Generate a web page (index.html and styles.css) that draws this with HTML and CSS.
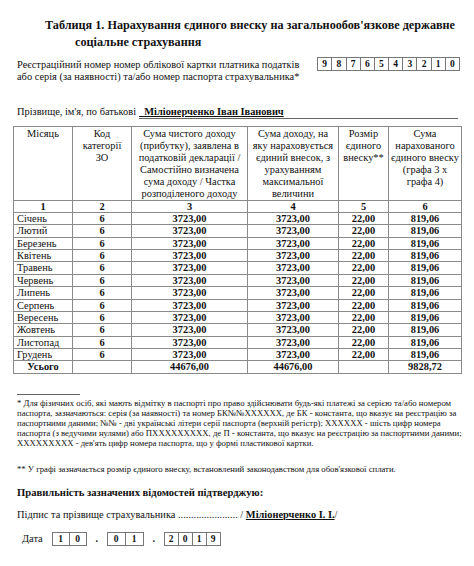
FILE: index.html
```html
<!DOCTYPE html>
<html lang="uk">
<head>
<meta charset="utf-8">
<link rel="stylesheet" href="styles.css">
</head>
<body>
<div class="page">
  <h1 class="title">Таблиця 1. Нарахування єдиного внеску на загальнообов'язкове державне соціальне страхування</h1>

  <div class="reg">
    <div class="reg-text">Реєстраційний номер номер облікової картки платника податків<br>або серія (за наявності) та/або номер паспорта страхувальника*</div>
    <div class="boxes">
      <span>9</span><span>8</span><span>7</span><span>6</span><span>5</span><span>4</span><span>3</span><span>2</span><span>1</span><span>0</span>
    </div>
  </div>

  <div class="name">
    <span class="name-label">Прізвище, ім'я, по батькові</span>
    <span class="name-value">&nbsp;&nbsp;Міліонерченко Іван Іванович</span>
  </div>

  <table class="grid">
    <colgroup>
      <col class="c1"><col class="c2"><col class="c3"><col class="c4"><col class="c5"><col class="c6">
    </colgroup>
    <thead>
      <tr class="head">
        <th>Місяць</th>
        <th>Код<br>категорії<br>ЗО</th>
        <th>Сума чистого доходу (прибутку), заявлена в податковій декларації / Самостійно визначена сума доходу / Частка розподіленого доходу</th>
        <th>Сума доходу, на яку нараховується єдиний внесок, з урахуванням максимальної величини</th>
        <th>Розмір єдиного внеску**</th>
        <th>Сума нарахованого єдиного внеску (графа 3 х графа 4)</th>
      </tr>
      <tr class="nums">
        <td>1</td><td>2</td><td>3</td><td>4</td><td>5</td><td>6</td>
      </tr>
    </thead>
    <tbody>
      <tr><td class="m">Січень</td><td>6</td><td>3723,00</td><td>3723,00</td><td>22,00</td><td>819,06</td></tr>
      <tr><td class="m">Лютий</td><td>6</td><td>3723,00</td><td>3723,00</td><td>22,00</td><td>819,06</td></tr>
      <tr><td class="m">Березень</td><td>6</td><td>3723,00</td><td>3723,00</td><td>22,00</td><td>819,06</td></tr>
      <tr><td class="m">Квітень</td><td>6</td><td>3723,00</td><td>3723,00</td><td>22,00</td><td>819,06</td></tr>
      <tr><td class="m">Травень</td><td>6</td><td>3723,00</td><td>3723,00</td><td>22,00</td><td>819,06</td></tr>
      <tr><td class="m">Червень</td><td>6</td><td>3723,00</td><td>3723,00</td><td>22,00</td><td>819,06</td></tr>
      <tr><td class="m">Липень</td><td>6</td><td>3723,00</td><td>3723,00</td><td>22,00</td><td>819,06</td></tr>
      <tr><td class="m">Серпень</td><td>6</td><td>3723,00</td><td>3723,00</td><td>22,00</td><td>819,06</td></tr>
      <tr><td class="m">Вересень</td><td>6</td><td>3723,00</td><td>3723,00</td><td>22,00</td><td>819,06</td></tr>
      <tr><td class="m">Жовтень</td><td>6</td><td>3723,00</td><td>3723,00</td><td>22,00</td><td>819,06</td></tr>
      <tr><td class="m">Листопад</td><td>6</td><td>3723,00</td><td>3723,00</td><td>22,00</td><td>819,06</td></tr>
      <tr><td class="m">Грудень</td><td>6</td><td>3723,00</td><td>3723,00</td><td>22,00</td><td>819,06</td></tr>
      <tr class="total"><td>Усього</td><td></td><td>44676,00</td><td>44676,00</td><td></td><td>9828,72</td></tr>
    </tbody>
  </table>

  <div class="rule"></div>
  <p class="note">* Для фізичних осіб, які мають відмітку в паспорті про право здійснювати будь-які платежі за серією та/або номером<br>паспорта, зазначаються: серія (за наявності) та номер БК№№XXXXXX, де БК - константа, що вказує на реєстрацію за<br>паспортними даними; №№ - дві українські літери серії паспорта (верхній регістр); XXXXXX - шість цифр номера<br>паспорта (з ведучими нулями) або ПXXXXXXXXX, де П - константа, що вказує на реєстрацію за паспортними даними;<br>XXXXXXXXX - дев'ять цифр номера паспорта, що у формі пластикової картки.</p>
  <p class="note note2">** У графі зазначається розмір єдиного внеску, встановлений законодавством для обов'язкової сплати.</p>

  <p class="confirm">Правильність зазначених відомостей підтверджую:</p>
  <p class="sign">Підпис та прізвище страхувальника ....................... / <span class="sign-name">Міліонерченко І. І.</span>/</p>

  <div class="date">
    <span class="date-label">Дата</span>
    <div class="dboxes d2"><span>1</span><span>0</span></div>
    <span class="dot">.</span>
    <div class="dboxes d2b"><span>0</span><span>1</span></div>
    <span class="dot">.</span>
    <div class="dboxes d4"><span>2</span><span>0</span><span>1</span><span>9</span></div>
  </div>
</div>
</body>
</html>
```

FILE: styles.css
```css
html, body {
  margin: 0;
  padding: 0;
  background: #fff;
}
body {
  font-family: "Liberation Serif", "Times New Roman", serif;
  color: #111;
}
.page {
  width: 474px;
  padding: 17px 0 0 0;
  box-sizing: border-box;
}
.title {
  margin: 0 16px 0 75px;
  text-indent: -30px;
  font-size: 12.2px;
  line-height: 17px;
  font-weight: bold;
}
.reg {
  display: flex;
  justify-content: space-between;
  align-items: flex-start;
  margin: 8px 14px 0 17px;
}
.reg-text {
  font-size: 10.4px;
  line-height: 12px;
}
.boxes, .dboxes {
  display: flex;
  border: 1px solid #777;
}
.boxes {
  margin-top: -2px;
}
.boxes span, .dboxes span {
  width: 13.2px;
  height: 12px;
  line-height: 12px;
  text-align: center;
  font-size: 9.5px;
  font-weight: bold;
  border-left: 1px solid #777;
}
.boxes span:first-child, .dboxes span:first-child {
  border-left: none;
}
.name {
  display: flex;
  margin: 22px 16px 0 17px;
  font-size: 10.4px;
  line-height: 13px;
}
.name-label {
  margin-right: 3px;
}
.name-value {
  flex: 1;
  font-weight: bold;
  text-decoration: underline;
  border-bottom: 1px solid #666;
}
.grid {
  margin: 7px 0 0 13px;
  width: 448px;
  border-collapse: collapse;
  table-layout: fixed;
  font-size: 10.4px;
}
.c1 { width: 59px; }
.c2 { width: 59px; }
.c3 { width: 116px; }
.c4 { width: 91px; }
.c5 { width: 50px; }
.c6 { width: 73px; }
.grid th, .grid td {
  border: 1px solid #8a8a8a;
  padding: 0 1px;
  text-align: center;
}
.grid th {
  font-weight: normal;
  vertical-align: top;
  line-height: 12px;
  height: 71px;
  padding: 1px 2px 0;
  box-sizing: border-box;
}
.nums td {
  font-weight: bold;
  line-height: 11px;
}
.grid tbody td {
  font-weight: bold;
  line-height: 11.36px;
}
.grid tbody td.m {
  font-weight: normal;
  text-align: left;
  padding-left: 3px;
}
.total td {
  font-weight: bold;
}
.rule {
  width: 63px;
  margin: 20px 0 0 17px;
  border-top: 1px solid #666;
}
.note {
  margin: 3px 0 0 17px;
  font-size: 8.7px;
  line-height: 10px;
  white-space: nowrap;
}
.note2 {
  margin-top: 16px;
}
.confirm {
  margin: 12px 0 0 17px;
  font-size: 10.6px;
  line-height: 13px;
  font-weight: bold;
}
.sign {
  margin: 9px 0 0 17px;
  font-size: 10.4px;
  line-height: 13px;
}
.sign-name {
  font-weight: bold;
  text-decoration: underline;
}
.date {
  display: flex;
  align-items: center;
  margin: 11px 0 0 22px;
  font-size: 10.4px;
}
.date-label {
  margin-right: 9px;
}
.d2 span { width: 16px; }
.d2b span { width: 17px; }
.d4 span { width: 13px; }
.dot {
  width: 20px;
  text-align: center;
  font-weight: bold;
}
```
